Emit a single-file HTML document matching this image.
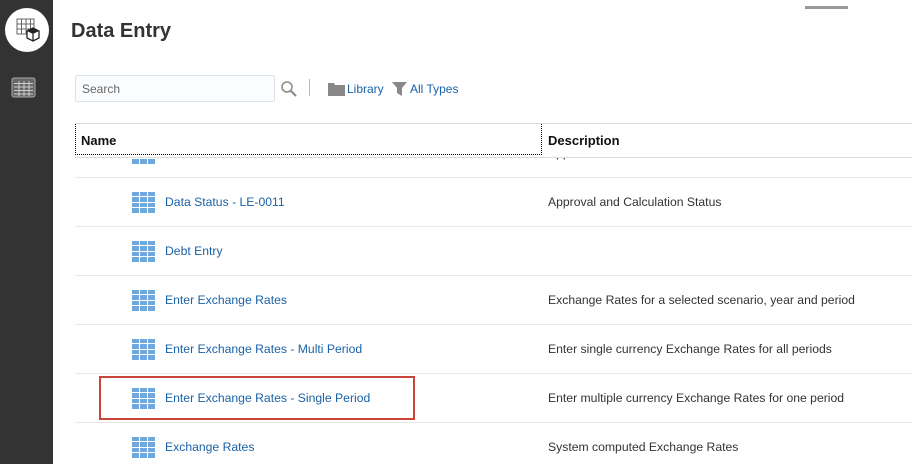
<!DOCTYPE html>
<html><head><style>
body{margin:0;width:912px;height:464px;overflow:hidden;background:#fff;font-family:"Liberation Sans",sans-serif;position:relative}
.side{position:absolute;left:0;top:0;width:53px;height:464px;background:#333}
.circ{position:absolute;left:5px;top:8px;width:44px;height:44px;border-radius:50%;background:#fff}
h1{position:absolute;left:71px;top:20px;margin:0;font-size:20px;font-weight:bold;color:#333}
.bar{position:absolute;left:805px;top:6px;width:43px;height:3px;background:#999}
.search{position:absolute;left:75px;top:75px;height:27px;border:1px solid #dde3ea;background:#fbfcfe;border-radius:2px;font-size:12px;color:#666;line-height:26px;padding-left:6px;box-sizing:border-box;width:200px}
.lnk{color:#1a62a8;font-size:12px;position:absolute;top:82px}
.hdr{position:absolute;left:75px;top:123px;width:837px;height:33px;border-top:1px solid #d6dde4;border-bottom:1px solid #d6dde4;font-size:13px;font-weight:bold;color:#111;background:#fff;z-index:2}
.row{position:absolute;left:75px;width:837px;height:48px;border-bottom:1px solid #e8e8e8;font-size:12.2px}
.row .n{position:absolute;left:90px;top:0;line-height:49px;color:#1a62a8}
.row .d{position:absolute;left:473px;top:0;line-height:49px;color:#333}
.ic{position:absolute;left:57px;top:14px}
</style></head><body>
<div class="side">
<div class="circ"><svg width="44" height="44" viewBox="0 0 44 44"><g stroke="#666" fill="none" stroke-width="1"><rect x="12" y="11" width="17" height="15"/><path d="M12 16h17M12 21h17M16.5 11v15M21 11v15M25.5 11v15"/></g><path d="M22 23l6-3 6 3v7l-6 3-6-3z" fill="#fff" stroke="#222" stroke-width="1.3"/><path d="M28 26v7" stroke="#222" stroke-width="1.3"/><path d="M22 23l6-3 6 3-6 3z" fill="#222"/></svg></div>
<svg style="position:absolute;left:11px;top:77px" width="25" height="21" viewBox="0 0 25 21"><rect x="1" y="1" width="23" height="19" rx="2" fill="#666" stroke="#aaa"/><g stroke="#ccc" stroke-width="1"><path d="M3 6.5h19M3 10h19M3 13.5h19M3 17h19M8 4v15M13 4v15M18 4v15"/></g></svg>
</div>
<div class="bar"></div>
<h1>Data Entry</h1>
<div class="search">Search</div>
<svg style="position:absolute;left:280px;top:80px" width="18" height="18"><circle cx="7" cy="7" r="5" stroke="#888" stroke-width="1.5" fill="none"/><path d="M11 11l5 5" stroke="#888" stroke-width="2"/></svg>
<div style="position:absolute;left:309px;top:79px;width:1px;height:17px;background:#bbb"></div>
<svg style="position:absolute;left:328px;top:82px" width="17" height="14"><path d="M0 1h6l1 2h10v11H0z" fill="#888"/></svg>
<span class="lnk" style="left:347px">Library</span>
<svg style="position:absolute;left:392px;top:82px" width="15" height="14"><path d="M0 0h15l-5 6v8l-5-3V6z" fill="#888"/></svg>
<span class="lnk" style="left:410px">All Types</span>
<div class="row" style="top:129px;height:48px"><svg class="ic" width="24" height="21"><use href="#g"/></svg><span class="n">Data Status</span><span class="d">Approval and Calculation Status</span></div>
<div class="hdr"><div style="position:absolute;left:0;top:0;width:467px;height:31px;border:1px dotted #000;border-top:none;box-sizing:border-box"></div><span style="position:absolute;left:6px;top:9px">Name</span><span style="position:absolute;left:473px;top:9px">Description</span></div>
<div class="row" style="top:178px"><svg class="ic" width="24" height="21"><use href="#g"/></svg><span class="n">Data Status - LE-0011</span><span class="d">Approval and Calculation Status</span></div>
<div class="row" style="top:227px"><svg class="ic" width="24" height="21"><use href="#g"/></svg><span class="n">Debt Entry</span></div>
<div class="row" style="top:276px"><svg class="ic" width="24" height="21"><use href="#g"/></svg><span class="n">Enter Exchange Rates</span><span class="d">Exchange Rates for a selected scenario, year and period</span></div>
<div class="row" style="top:325px"><svg class="ic" width="24" height="21"><use href="#g"/></svg><span class="n">Enter Exchange Rates - Multi Period</span><span class="d">Enter single currency Exchange Rates for all periods</span></div>
<div class="row" style="top:374px"><svg class="ic" width="24" height="21"><use href="#g"/></svg><span class="n">Enter Exchange Rates - Single Period</span><span class="d">Enter multiple currency Exchange Rates for one period</span></div>
<div class="row" style="top:423px;border:none"><svg class="ic" width="24" height="21"><use href="#g"/></svg><span class="n">Exchange Rates</span><span class="d">System computed Exchange Rates</span></div>
<div style="position:absolute;left:99px;top:376px;width:316px;height:44px;border:2px solid #c9443a;box-sizing:border-box"></div>
<svg width="0" height="0" style="position:absolute"><defs><g id="g" fill="#6fa8dc"><rect x="0" y="0" width="7" height="4"/><rect x="8" y="0" width="7" height="4"/><rect x="16" y="0" width="7" height="4"/><rect x="0" y="5" width="7" height="5"/><rect x="8" y="5" width="7" height="5"/><rect x="16" y="5" width="7" height="5"/><rect x="0" y="11" width="7" height="4"/><rect x="8" y="11" width="7" height="4"/><rect x="16" y="11" width="7" height="4"/><rect x="0" y="16" width="7" height="5"/><rect x="8" y="16" width="7" height="5"/><rect x="16" y="16" width="7" height="5"/></g></defs></svg>
</body></html>
